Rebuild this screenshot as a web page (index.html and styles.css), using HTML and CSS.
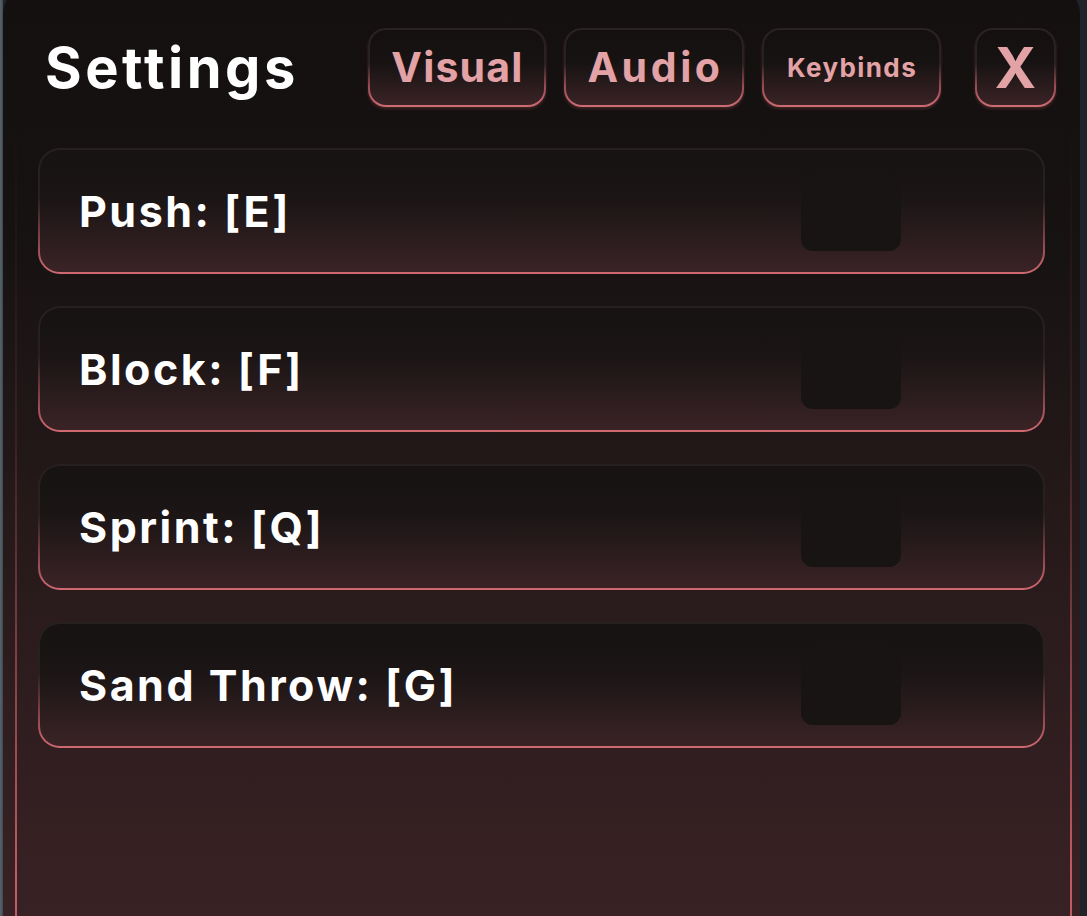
FILE: index.html
```html
<!DOCTYPE html>
<html lang="en">
<head>
<meta charset="utf-8">
<title>Settings</title>
<link rel="stylesheet" href="styles.css">
</head>
<body>
<div class="panel">
  <div class="header">
    <h1 class="title">Settings</h1>
    <div class="tabs">
      <button class="btn tab-visual">Visual</button>
      <button class="btn tab-audio">Audio</button>
      <button class="btn tab-keybinds">Keybinds</button>
      <button class="btn close">X</button>
    </div>
  </div>
  <div class="rows">
    <div class="row"><span class="label">Push: [E]</span><span class="slot"></span></div>
    <div class="row"><span class="label">Block: [F]</span><span class="slot"></span></div>
    <div class="row"><span class="label">Sprint: [Q]</span><span class="slot"></span></div>
    <div class="row"><span class="label">Sand Throw: [G]</span><span class="slot"></span></div>
  </div>
</div>
</body>
</html>
```
FILE: styles.css
```css
html, body {
  margin: 0;
  padding: 0;
  height: 100%;
  overflow: hidden;
}
body {
  background: linear-gradient(to right, #5b646c 0px, #3c4a52 3px, #20232a 3px);
  font-family: "Inter", "Open Sans", sans-serif;
}
.panel {
  position: relative;
  margin: -14px 7px 0 3px;
  height: 960px;
  border-radius: 28px;
  background: linear-gradient(to bottom, #141010 0%, #161212 25%, #281a1b 60%, #3a2225 100%);
  padding: 42px 24px 0 35px;
  box-sizing: border-box;
}
.panel::before {
  content: "";
  position: absolute;
  left: 12px;
  right: 8px;
  top: 120px;
  bottom: 0;
  border: 2px solid #c25a64;
  border-radius: 26px;
  -webkit-mask-image: linear-gradient(to bottom, transparent 0%, rgba(0,0,0,0.15) 40%, #000 92%);
  mask-image: linear-gradient(to bottom, transparent 0%, rgba(0,0,0,0.15) 40%, #000 92%);
  pointer-events: none;
}
.header {
  display: flex;
  justify-content: space-between;
  align-items: center;
  height: 79px;
}
.title {
  margin: 0 0 0 7px;
  color: #ffffff;
  font-size: 56px;
  font-weight: 700;
  letter-spacing: 3.5px;
  line-height: 1;
}
.tabs {
  display: flex;
  gap: 18px;
  align-items: center;
}
.btn {
  box-sizing: border-box;
  height: 79px;
  border: 2px solid transparent;
  border-radius: 18px;
  background:
    linear-gradient(to bottom, #141010 0%, #181313 45%, #3a2326 100%) padding-box,
    linear-gradient(to bottom, #2a2222 0%, #2a2222 45%, #9c4c54 75%, #d06c74 100%) border-box;
  color: #e3a2a5;
  font-family: inherit;
  font-weight: 700;
  padding: 0;
  line-height: 1;
  box-shadow: 0 2px 3px rgba(200, 90, 100, 0.25);
}
.tab-visual { width: 178px; font-size: 41px; letter-spacing: 1.2px; text-indent: 1px; }
.tab-audio { width: 180px; font-size: 41px; letter-spacing: 3.6px; text-indent: 3px; }
.tab-keybinds { width: 179px; font-size: 26px; letter-spacing: 1.4px; text-indent: 1px; }
.close { width: 81px; font-size: 56px; margin-left: 16px; }
.rows {
  display: flex;
  flex-direction: column;
  gap: 32px;
  margin-top: 41px;
  margin-right: 11px;
}
.row {
  box-sizing: border-box;
  height: 126px;
  border: 2px solid transparent;
  border-radius: 22px;
  background:
    linear-gradient(to bottom, #171313 0%, #1b1515 40%, #3a2326 100%) padding-box,
    linear-gradient(to bottom, #272020 0%, #272020 40%, #8c464c 75%, #d26a72 100%) border-box;
  display: flex;
  align-items: center;
  padding-left: 39px;
  position: relative;
}
.label {
  color: #ffffff;
  font-size: 43px;
  font-weight: 700;
  letter-spacing: 2.5px;
  flex: 1;
}
.slot {
  width: 100px;
  height: 79px;
  border-radius: 12px;
  background: #181414;
  margin-right: 142px;
}
```
